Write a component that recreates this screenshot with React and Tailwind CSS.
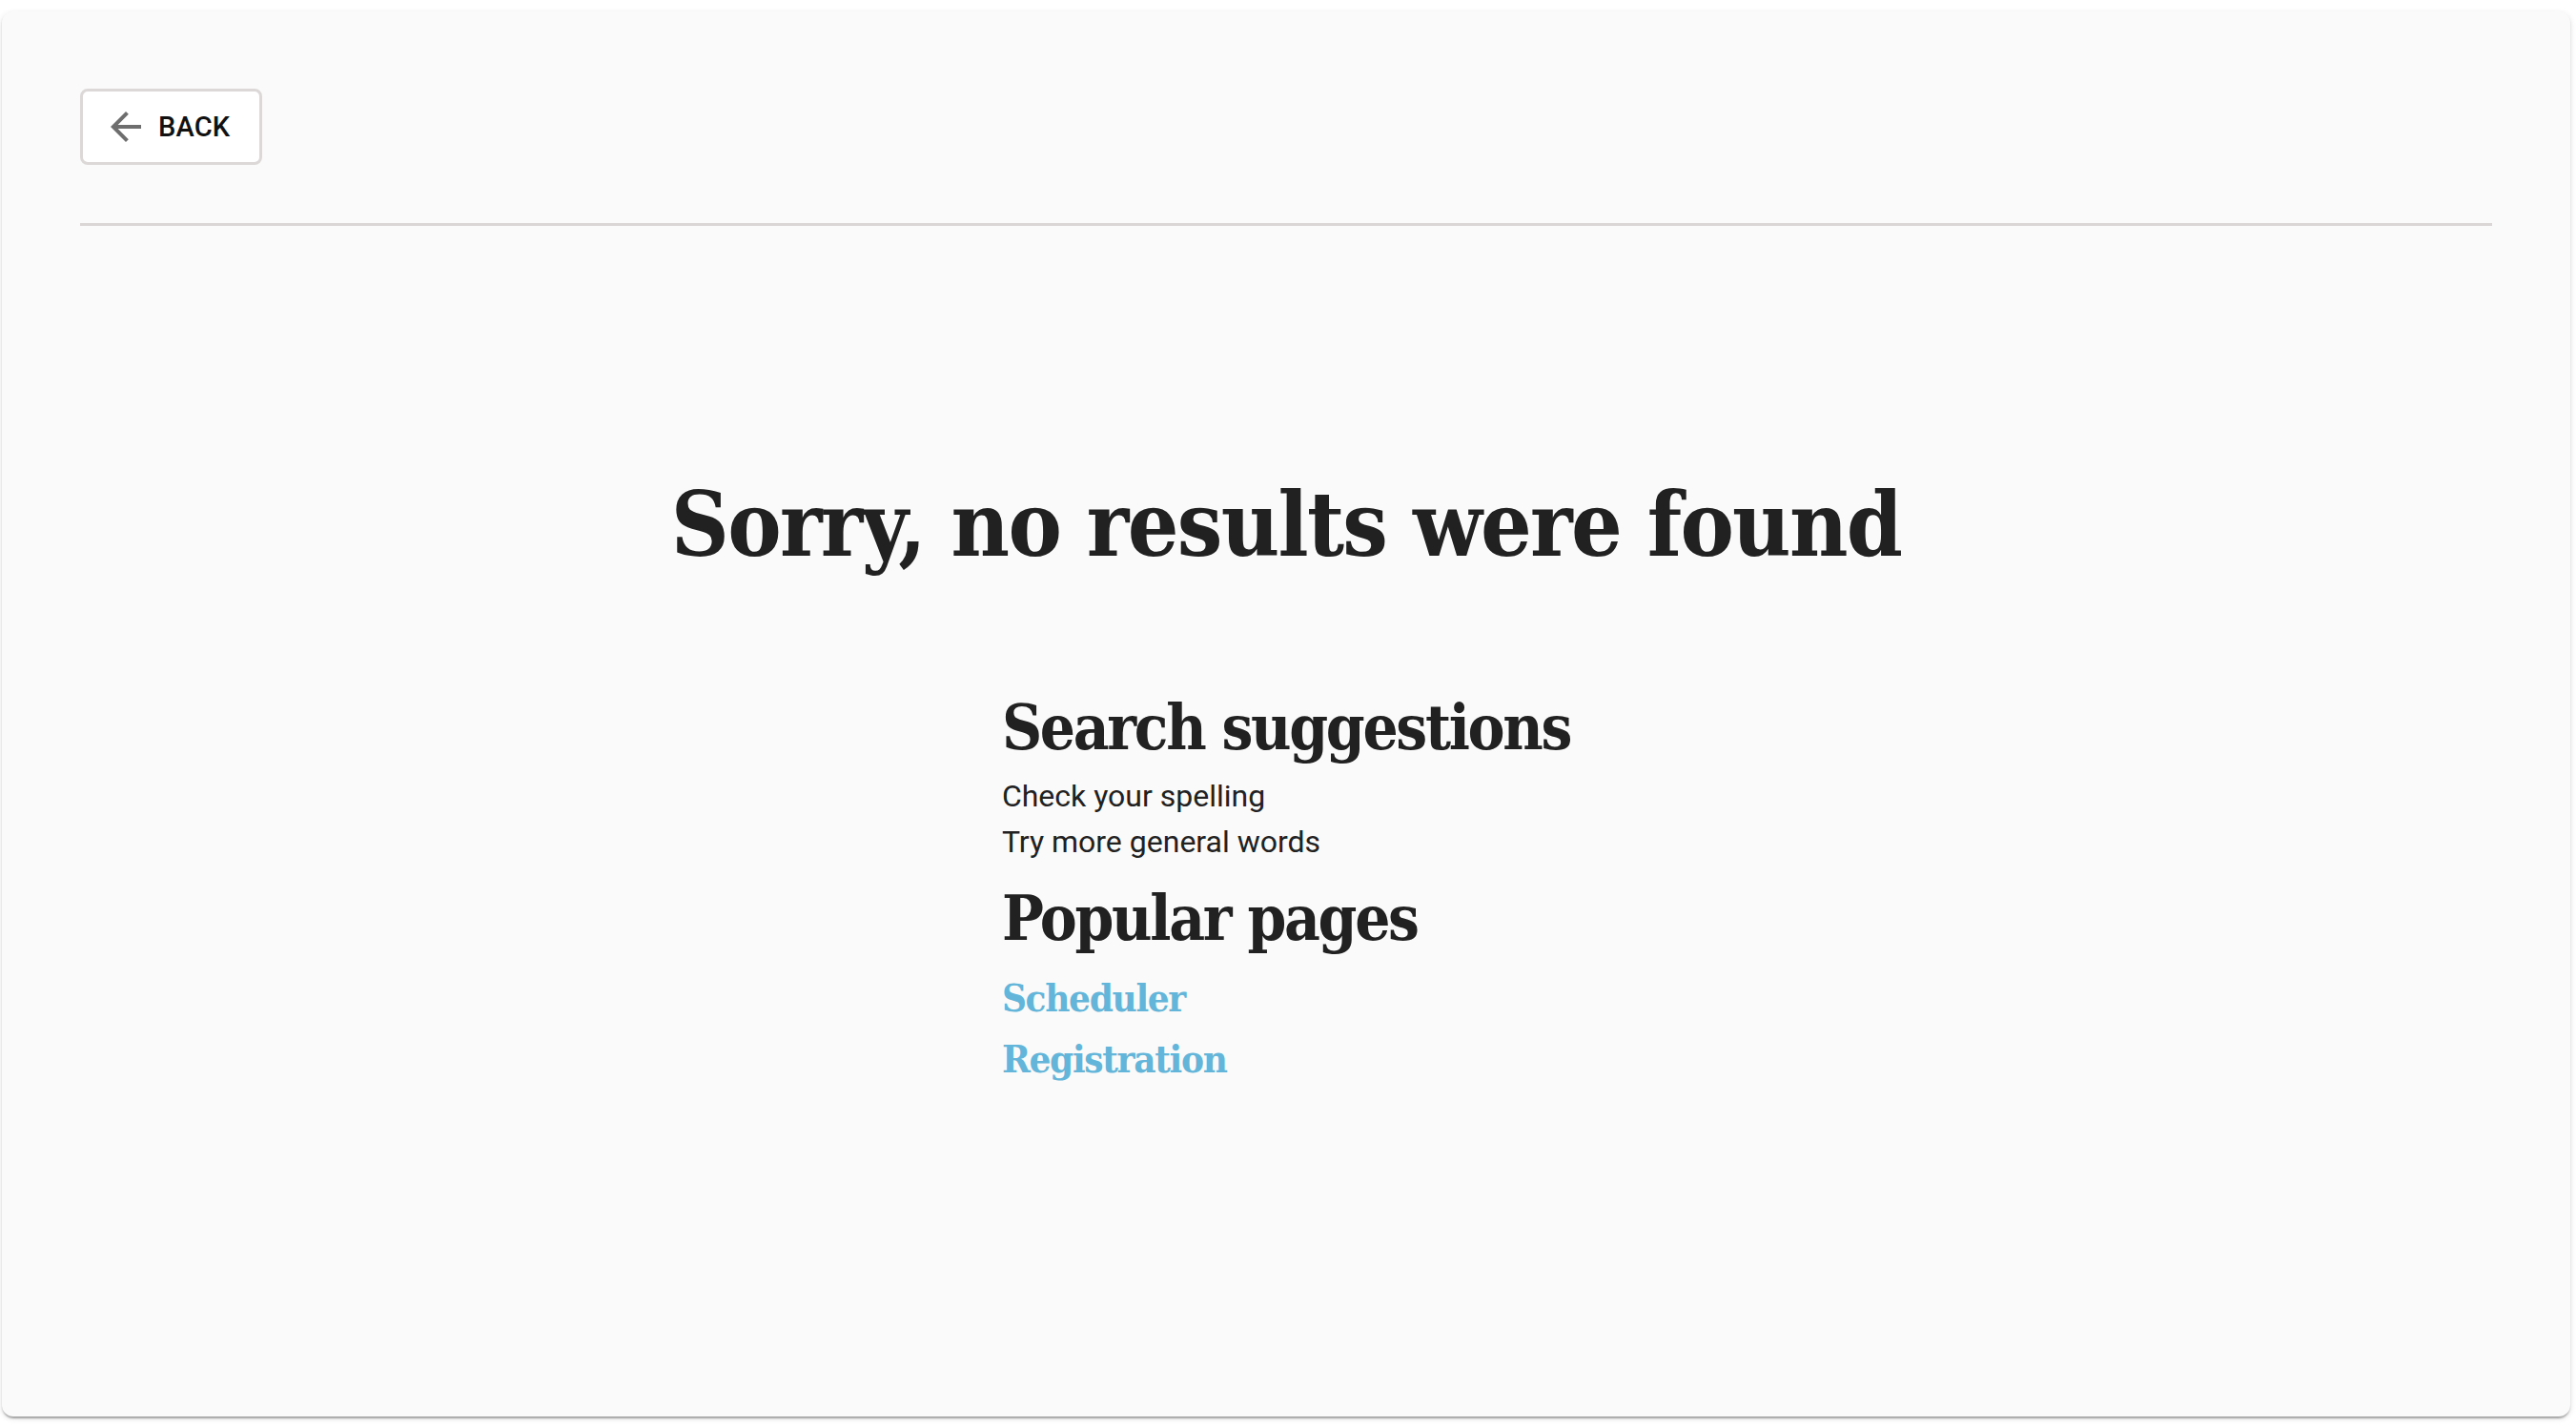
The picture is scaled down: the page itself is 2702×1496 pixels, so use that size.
import React from "react"

function BackButton() {
  return (
    <button className="flex items-center h-[80px] pl-[21px] pr-[31px] border-[3px] border-[#dcd8d8] rounded-[8px] bg-white cursor-pointer">
      <svg viewBox="0 0 24 24" className="w-[48px] h-[48px] fill-[#6e6e6e]">
        <path d="M20 11H7.83l5.59-5.59L12 4l-8 8 8 8 1.41-1.41L7.83 13H20v-2z" />
      </svg>
      <span className="ml-[10px] font-['Roboto',sans-serif] font-medium text-[29px] leading-none tracking-[0.2px] text-[#111111]">BACK</span>
    </button>
  )
}

export default function App() {
  const slab = "font-['DejaVu_Serif',serif] font-bold [font-stretch:condensed] text-[#212121]"
  return (
    <div className="h-screen bg-white pt-[12px] pl-[2px] pr-[6px] pb-[10px]">
      <main className="h-full rounded-[12px] bg-[#fafafa] shadow-[0_4px_2px_-2px_rgba(0,0,0,0.2),0_2px_2px_0_rgba(0,0,0,0.14),0_2px_6px_0_rgba(0,0,0,0.12)] px-[82px] pt-[81px]">
        <div className="flex">
          <BackButton />
        </div>
        <div className="mt-[61px] h-[3px] bg-[#dad6d6]" />

        <div className="flex flex-col items-center">
          <h1 className={`${slab} mt-[266px] text-[94px] leading-none tracking-[-1.7px]`}>Sorry, no results were found</h1>

          <div className="mt-[134px] w-fit">
            <h2 className={`${slab} text-[65px] leading-none tracking-[-2.3px]`}>Search suggestions</h2>
            <ul className="mt-[15px] font-['Roboto',sans-serif] text-[32px] leading-[48px] text-[#212121]">
              <li>Check your spelling</li>
              <li>Try more general words</li>
            </ul>
            <h2 className={`${slab} mt-[24px] text-[65px] leading-none tracking-[-2.3px]`}>Popular pages</h2>
            <div className="flex flex-col items-start">
              <a href="#" className="font-['DejaVu_Serif',serif] font-bold [font-stretch:condensed] mt-[31px] text-[40px] leading-none tracking-[-1.3px] text-[#63b5d9]">Scheduler</a>
              <a href="#" className="font-['DejaVu_Serif',serif] font-bold [font-stretch:condensed] mt-[24px] text-[40px] leading-none tracking-[-1.3px] text-[#63b5d9]">Registration</a>
            </div>
          </div>
        </div>
      </main>
    </div>
  )
}
